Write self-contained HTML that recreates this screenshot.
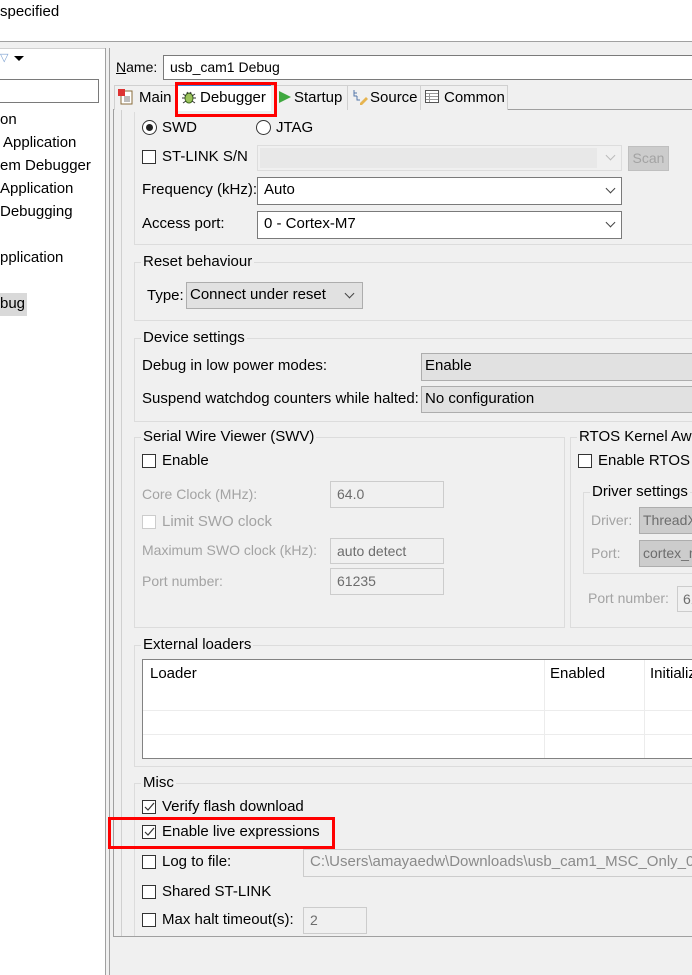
<!DOCTYPE html>
<html><head><meta charset="utf-8">
<style>
*{margin:0;padding:0;box-sizing:border-box}
html,body{width:692px;height:975px;overflow:hidden}
body{background:#f0f0f0;font-family:"Liberation Sans",sans-serif;font-size:14px;color:#000}
#r{position:relative;width:692px;height:975px;overflow:hidden}
.a{position:absolute;white-space:nowrap}
.t{position:absolute;white-space:nowrap;line-height:16px}
.g{color:#a3a3a3}
.grp{position:absolute;border:1px solid #dcdcdc}
.gt{position:absolute;background:#f0f0f0;padding:0 2px;line-height:16px;white-space:nowrap}
.cb{position:absolute;width:14px;height:14px;border:1px solid #333;background:#fff}
.cbd{border-color:#ccc}
.fld{position:absolute;border:1px solid #ccc;background:#f0f0f0;line-height:24px;padding-left:6px;color:#6d6d6d;white-space:nowrap;overflow:hidden}
.cmb{position:absolute;border:1px solid #7a7a7a;background:#fff;line-height:24px;padding-left:6px;white-space:nowrap;overflow:hidden}
.ro{position:absolute;border:1px solid #adadad;background:#e1e1e1;line-height:24px;padding-left:3px;white-space:nowrap;overflow:hidden}
.chev{position:absolute;width:7px;height:7px;border-right:1px solid #444;border-bottom:1px solid #444;transform:rotate(45deg)}
.vl{position:absolute;width:1px}
</style></head><body><div id="r">
<div class="a" style="left:0;top:0;width:692px;height:41px;background:#fff"></div>
<div class="a" style="left:0;top:41px;width:692px;height:1px;background:#a0a0a0"></div>
<div class="t" style="left:0;top:4px;font-size:15px">specified</div>
<div class="a" style="left:0;top:48px;width:105px;height:927px;background:#fff"></div>
<div class="a" style="left:0;top:48px;width:105px;height:1px;background:#d0d0d0"></div>
<div class="vl" style="left:105px;top:48px;height:927px;background:#a0a0a0"></div>
<div class="vl" style="left:109px;top:48px;height:927px;background:#a0a0a0"></div>
<div class="a" style="left:0;top:51px;font-size:11px;color:#7a9fd0">▽</div>
<div class="a" style="left:14px;top:56px;width:0;height:0;border-left:5px solid transparent;border-right:5px solid transparent;border-top:5px solid #000"></div>
<div class="a" style="left:-1px;top:79px;width:100px;height:24px;border:1px solid #7a7a7a;background:#fff"></div>
<div class="t" style="left:0;top:112px;font-size:15px">on</div>
<div class="t" style="left:3px;top:135px;font-size:15px">Application</div>
<div class="t" style="left:0;top:158px;font-size:15px">em Debugger</div>
<div class="t" style="left:0;top:181px;font-size:15px">Application</div>
<div class="t" style="left:0;top:204px;font-size:15px">Debugging</div>
<div class="t" style="left:0;top:250px;font-size:15px">pplication</div>
<div class="a" style="left:0;top:293px;width:27px;height:23px;background:#d9d9d9"></div>
<div class="t" style="left:0;top:296px;font-size:15px">bug</div>
<div class="t" style="left:116px;top:59px"><u>N</u>ame:</div>
<div class="a" style="left:163px;top:55px;width:540px;height:25px;border:1px solid #7a7a7a;background:#fff;line-height:23px;padding-left:6px">usb_cam1 Debug</div>
<div class="a" style="left:113px;top:109px;width:590px;height:828px;border:1px solid #a0a0a0;background:#f0f0f0"></div>
<div class="vl" style="left:121px;top:110px;height:826px;background:#d0d0d0"></div>
<div class="a" style="left:114px;top:85px;width:394px;height:25px;border:1px solid #d0d0d0;border-bottom:none;background:#f0f0f0"></div>
<div class="a" style="left:176px;top:84px;width:95px;height:27px;background:#fff;border-top:2px solid #3c7fd6"></div>
<div class="vl" style="left:347px;top:86px;height:24px;background:#d0d0d0"></div>
<div class="vl" style="left:420px;top:86px;height:24px;background:#d0d0d0"></div>
<svg class="a" style="left:118px;top:89px" width="16" height="16"><rect x="3" y="2" width="11" height="13" fill="#fff" stroke="#8a6d3b"/><rect x="0" y="0" width="7" height="7" fill="#d33"/><path d="M6 8h6M6 10h6M6 12h6" stroke="#7a7a7a"/></svg>
<svg class="a" style="left:181px;top:89px" width="16" height="16"><ellipse cx="8" cy="9" rx="4" ry="5" fill="#9bc25b" stroke="#3d6b1e"/><path d="M2 5l3 2M14 5l-3 2M1 9h3M12 9h3M2 14l3-2M14 14l-3-2M6 3l1 2M10 3l-1 2" stroke="#333"/></svg>
<svg class="a" style="left:278px;top:90px" width="14" height="14"><path d="M1 1L13 7L1 13Z" fill="#3fa83f"/></svg>
<svg class="a" style="left:352px;top:89px" width="16" height="16"><path d="M2 1v6h3M2 4h3M5 7v4h3" stroke="#5577aa" fill="none"/><path d="M8 14l6-6 2 2-6 6h-2z" fill="#e6b450"/></svg>
<svg class="a" style="left:425px;top:90px" width="14" height="13"><rect x="0.5" y="0.5" width="13" height="12" fill="#fff" stroke="#555"/><path d="M1 3.5h12M1 6.5h12M1 9.5h12M4.5 3v9" stroke="#999"/></svg>
<div class="t" style="left:139px;top:90px;font-size:15px">Main</div>
<div class="t" style="left:200px;top:90px;font-size:15px">Debugger</div>
<div class="t" style="left:294px;top:90px;font-size:15px">Startup</div>
<div class="t" style="left:370px;top:90px;font-size:15px">Source</div>
<div class="t" style="left:444px;top:90px;font-size:15px">Common</div>
<div class="a" style="left:175px;top:82px;width:102px;height:35px;border:3px solid #f00"></div>

<div class="grp" style="left:134px;top:112px;width:600px;height:133px;border-top:none"></div>
<div class="a" style="left:142px;top:120px;width:15px;height:15px;border:1px solid #333;border-radius:50%;background:#fff"></div>
<div class="a" style="left:146px;top:124px;width:7px;height:7px;border-radius:50%;background:#222"></div>
<div class="t" style="left:162px;top:120px;font-size:15px">SWD</div>
<div class="a" style="left:256px;top:120px;width:15px;height:15px;border:1px solid #333;border-radius:50%;background:#fff"></div>
<div class="t" style="left:276px;top:120px;font-size:15px">JTAG</div>
<div class="cb" style="left:142px;top:150px"></div>
<div class="t" style="left:162px;top:149px;font-size:15px">ST-LINK S/N</div>
<div class="a" style="left:257px;top:145px;width:365px;height:26px;border:1px solid #ddd;background:#f0f0f0"></div>
<div class="a" style="left:260px;top:148px;width:337px;height:20px;background:#e8e8e8"></div>
<div class="chev" style="left:607px;top:152px;border-color:#bbb"></div>
<div class="a g" style="left:628px;top:146px;width:41px;height:25px;border:1px solid #bfbfbf;background:#ccc;line-height:23px;text-align:center">Scan</div>
<div class="t" style="left:142px;top:182px;font-size:15px">Frequency (kHz):</div>
<div class="cmb" style="left:257px;top:177px;width:365px;height:28px;font-size:15px">Auto</div>
<div class="chev" style="left:607px;top:185px"></div>
<div class="t" style="left:142px;top:216px;font-size:15px">Access port:</div>
<div class="cmb" style="left:257px;top:211px;width:365px;height:28px;font-size:15px">0 - Cortex-M7</div>
<div class="chev" style="left:607px;top:219px"></div>

<div class="grp" style="left:134px;top:262px;width:600px;height:59px"></div>
<div class="gt" style="left:141px;top:254px;font-size:15px">Reset behaviour</div>
<div class="t" style="left:147px;top:288px;font-size:15px">Type:</div>
<div class="ro" style="left:186px;top:282px;width:177px;height:27px;font-size:15px">Connect under reset</div>
<div class="chev" style="left:346px;top:290px"></div>

<div class="grp" style="left:134px;top:338px;width:600px;height:84px"></div>
<div class="gt" style="left:141px;top:330px;font-size:15px">Device settings</div>
<div class="t" style="left:142px;top:358px;font-size:15px">Debug in low power modes:</div>
<div class="ro" style="left:421px;top:353px;width:290px;height:28px;font-size:15px">Enable</div>
<div class="t" style="left:142px;top:391px;font-size:15px">Suspend watchdog counters while halted:</div>
<div class="ro" style="left:421px;top:386px;width:290px;height:27px;font-size:15px">No configuration</div>

<div class="grp" style="left:134px;top:437px;width:431px;height:191px"></div>
<div class="gt" style="left:141px;top:429px;font-size:15px">Serial Wire Viewer (SWV)</div>
<div class="cb" style="left:142px;top:454px"></div>
<div class="t" style="left:162px;top:453px;font-size:15px">Enable</div>
<div class="t g" style="left:142px;top:486px">Core Clock (MHz):</div>
<div class="fld" style="left:330px;top:481px;width:114px;height:27px">64.0</div>
<div class="cb cbd" style="left:142px;top:515px"></div>
<div class="t g" style="left:162px;top:514px;font-size:15px">Limit SWO clock</div>
<div class="t g" style="left:142px;top:542px">Maximum SWO clock (kHz):</div>
<div class="fld" style="left:330px;top:538px;width:114px;height:26px">auto detect</div>
<div class="t g" style="left:142px;top:573px">Port number:</div>
<div class="fld" style="left:330px;top:568px;width:114px;height:27px">61235</div>

<div class="grp" style="left:570px;top:437px;width:150px;height:191px"></div>
<div class="gt" style="left:577px;top:429px;font-size:15px">RTOS Kernel Awareness</div>
<div class="cb" style="left:578px;top:454px"></div>
<div class="t" style="left:598px;top:453px;font-size:15px">Enable RTOS Proxy</div>
<div class="grp" style="left:583px;top:492px;width:140px;height:82px"></div>
<div class="gt" style="left:590px;top:484px;font-size:15px">Driver settings</div>
<div class="t g" style="left:591px;top:512px">Driver:</div>
<div class="ro" style="left:639px;top:507px;width:80px;height:27px;background:#ccc;color:#6d6d6d">ThreadX</div>
<div class="t g" style="left:591px;top:545px">Port:</div>
<div class="ro" style="left:639px;top:540px;width:80px;height:27px;background:#ccc;color:#6d6d6d">cortex_m7</div>
<div class="t g" style="left:588px;top:590px">Port number:</div>
<div class="fld" style="left:677px;top:586px;width:40px;height:26px;padding-left:5px">61234</div>

<div class="grp" style="left:134px;top:645px;width:600px;height:122px"></div>
<div class="gt" style="left:141px;top:637px;font-size:15px">External loaders</div>
<div class="a" style="left:142px;top:659px;width:560px;height:100px;border:1px solid #828282;background:#fff"></div>
<div class="a" style="left:143px;top:710px;width:560px;height:1px;background:#ececec"></div>
<div class="a" style="left:143px;top:734px;width:560px;height:1px;background:#ececec"></div>
<div class="vl" style="left:544px;top:660px;height:98px;background:#ececec"></div>
<div class="vl" style="left:644px;top:660px;height:98px;background:#ececec"></div>
<div class="t" style="left:150px;top:666px;font-size:15px">Loader</div>
<div class="t" style="left:550px;top:666px;font-size:15px">Enabled</div>
<div class="t" style="left:650px;top:666px;font-size:15px">Initialize</div>

<div class="grp" style="left:134px;top:783px;width:600px;height:153px;border-bottom:none"></div>
<div class="gt" style="left:141px;top:775px;font-size:15px">Misc</div>
<div class="cb" style="left:142px;top:800px"></div>
<svg class="a" style="left:143px;top:801px" width="12" height="12"><path d="M2 6l3 3 6-7" stroke="#333" stroke-width="1.2" fill="none"/></svg>
<div class="t" style="left:162px;top:799px;font-size:15px">Verify flash download</div>
<div class="cb" style="left:142px;top:825px"></div>
<svg class="a" style="left:143px;top:826px" width="12" height="12"><path d="M2 6l3 3 6-7" stroke="#333" stroke-width="1.2" fill="none"/></svg>
<div class="t" style="left:162px;top:824px;font-size:15px">Enable live expressions</div>
<div class="a" style="left:108px;top:817px;width:227px;height:32px;border:3px solid #f00"></div>
<div class="cb" style="left:142px;top:855px"></div>
<div class="t" style="left:162px;top:854px;font-size:15px">Log to file:</div>
<div class="fld" style="left:303px;top:849px;width:400px;height:28px;color:#8a8a8a;font-size:15px">C:\Users\amayaedw\Downloads\usb_cam1_MSC_Only_0603</div>
<div class="cb" style="left:142px;top:885px"></div>
<div class="t" style="left:162px;top:884px;font-size:15px">Shared ST-LINK</div>
<div class="cb" style="left:142px;top:913px"></div>
<div class="t" style="left:162px;top:912px;font-size:15px">Max halt timeout(s):</div>
<div class="fld" style="left:303px;top:907px;width:64px;height:27px">2</div>
</div></body></html>
